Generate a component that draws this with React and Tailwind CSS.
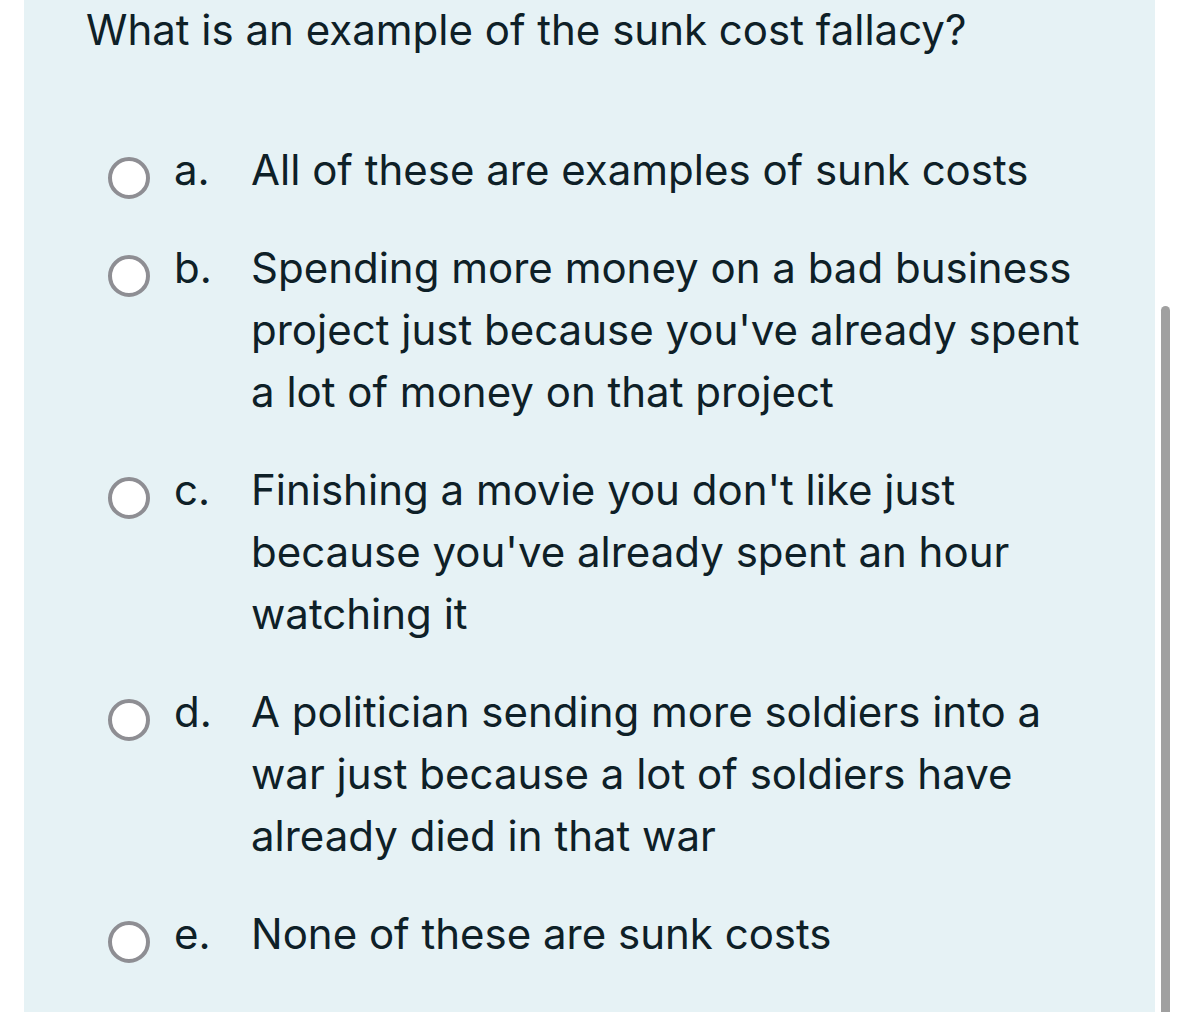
const options = [
  { letter: 'a.', text: 'All of these are examples of sunk costs' },
  { letter: 'b.', text: "Spending more money on a bad business project just because you've already spent a lot of money on that project" },
  { letter: 'c.', text: "Finishing a movie you don't like just because you've already spent an hour watching it" },
  { letter: 'd.', text: 'A politician sending more soldiers into a war just because a lot of soldiers have already died in that war' },
  { letter: 'e.', text: 'None of these are sunk costs' },
];

const Radio = () => (
  <div className="mt-[18px] w-[42px] h-[42px] shrink-0 rounded-full border-[4px] border-[#8e8e93] bg-white" />
);

export default function App() {
  return (
    <div className="w-[1179px] h-[1012px] bg-white flex overflow-hidden font-['Inter',sans-serif] text-[#0e2027]">
      <div className="ml-[24px] w-[1131px] h-[1012px] bg-[#e6f2f5] pl-[62px] pt-[5px]">
        <h1 className="text-[42px] leading-[50px] font-normal">What is an example of the sunk cost fallacy?</h1>

        <div className="mt-[84px] flex flex-col gap-[36px] pl-[22px]">
          {options.map(o => (
            <div key={o.letter} className="flex items-start">
              <Radio />
              <span className="ml-[24px] w-[77px] shrink-0 text-[42px] leading-[62px]">{o.letter}</span>
              <p className="w-[852px] text-[42px] leading-[62px]">{o.text}</p>
            </div>
          ))}
        </div>
      </div>
      <div className="ml-[6px] mt-[306px] w-[9px] h-[706px] rounded-t-full bg-[#a0a0a0]" />
    </div>
  );
}
